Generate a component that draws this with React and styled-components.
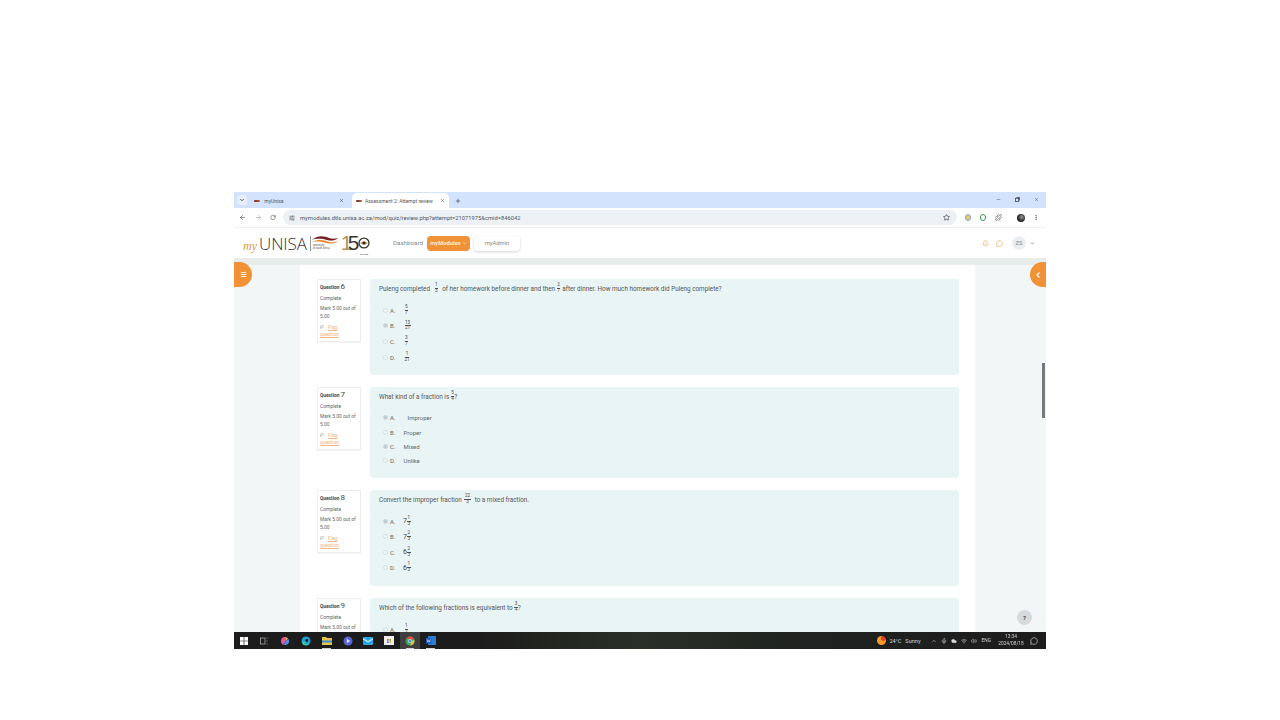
import React from "react";
import styled, { createGlobalStyle } from "styled-components";
import { ArrowLeft, ArrowRight, RotateCw, SlidersHorizontal, Star, Puzzle, MoreVertical, Bell, MessageCircle, ChevronDown, ChevronLeft, ChevronUp, Plus, X, Minus, Menu, Flag, Wifi, Volume2, Mic, Cloud } from "lucide-react";

const Global = createGlobalStyle`
  html, body { margin: 0; padding: 0; background: #fff; height: 720px; overflow: hidden; }
  body { font-family: Roboto, "Liberation Sans", sans-serif; color: #333; }
`;

const Page = styled.div`
  width: 1280px; height: 720px; background: #fff; padding: 192px 234px 71px; box-sizing: border-box;
`;
const Window = styled.div`
  width: 812px; height: 457px; display: flex; flex-direction: column; overflow: hidden; filter: blur(0.45px);
`;

/* Browser chrome */
const TabStrip = styled.div`
  height: 16px; flex: none; background: #d3e3fd; display: flex; align-items: flex-end; padding-left: 3px; position: relative;
`;
const TabMenu = styled.div`
  width: 10px; height: 10px; margin: 0 3px 3px 0; border-radius: 3px; background: #e8eef9; display: flex; align-items: center; justify-content: center; color: #333;
`;
const Tab = styled.div`
  width: ${p => p.$w}px; height: 15px; display: flex; align-items: center; box-sizing: border-box; padding: 0 ${p => p.$right}px 0 4px; gap: 3px;
  background: ${p => (p.$active ? "#fff" : "transparent")}; border-radius: 5px 5px 0 0; font-size: 5px; color: #555; white-space: nowrap;
`;
const TabMark = styled.span`
  width: 6px; height: 2px; background: linear-gradient(90deg, #6b2b2b, #c9603a); border-radius: 1px; flex: none;
`;
const TabTitle = styled.span` flex: 1; `;
const NewTab = styled.div` display: flex; align-items: center; margin: 0 0 4px 6px; color: #444; `;
const WindowButtons = styled.div`
  position: absolute; right: 7px; top: 5px; display: flex; gap: 14px; color: #444;
`;
const Toolbar = styled.div`
  height: 20px; flex: none; background: #fff; display: flex; align-items: center; padding-left: 4px; color: #555; border-bottom: 1px solid #eef0f2; box-sizing: border-box;
`;
const NavIcon = styled.span`
  display: flex; width: ${p => p.$w}px; justify-content: center; flex: none; color: ${p => p.$c || "#555"};
`;
const UrlPill = styled.div`
  width: 674px; height: 15px; margin-left: 7px; border-radius: 8px; background: #edf1f6; display: flex; align-items: center; padding: 0 7px 0 6px; box-sizing: border-box; gap: 5px; font-size: 5.8px; color: #555; flex: none;
`;
const UrlText = styled.span` flex: 1; white-space: nowrap; `;
const ExtDot = styled.span`
  width: 6.5px; height: 6.5px; border-radius: 50%; background: ${p => p.$bg}; border: 1.4px solid ${p => p.$c}; box-sizing: border-box; display: block;
`;
const Avatar = styled.span`
  width: 8px; height: 8px; border-radius: 50%; background: radial-gradient(circle at 60% 40%, #999, #222 60%); display: block;
`;

/* Site header */
const SiteHeader = styled.header`
  height: 30px; flex: none; background: #fff; display: flex; align-items: center; padding-left: 9px; position: relative;
`;
const Logo = styled.div` display: flex; align-items: center; width: 150px; flex: none; height: 24px; `;
const LogoMy = styled.span`
  font: italic 12px "Liberation Serif", serif; color: #e9983e; margin-top: 6px; width: 16px;
`;
const LogoName = styled.span` font: 300 17px "Open Sans", "Liberation Sans", sans-serif; color: #33333a; letter-spacing: -0.1px; `;
const LogoRule = styled.span` width: 1px; height: 15px; background: #999; margin: 0 1px 0 3px; `;
const LogoBadge = styled.div` display: flex; flex-direction: column; width: 26px; margin-top: -1px; `;
const LogoSmall = styled.span` font: 2.7px "Liberation Sans", sans-serif; color: #444; line-height: 3px; margin-left: 1px; white-space: nowrap; `;
const Logo150 = styled.div` display: flex; align-items: center; margin-left: 4px; position: relative; height: 20px; `;
const LogoOne = styled.span` font: 400 21px "Liberation Sans", sans-serif; color: #a8945c; line-height: 20px; width: 7px; margin-left: -1px; `;
const LogoFive = styled.span` font: 400 21px "Liberation Sans", sans-serif; color: #3a3428; line-height: 20px; width: 10px; `;
const LogoYears = styled.span` position: absolute; left: 18px; bottom: -3px; font: 700 2.4px "Liberation Sans", sans-serif; color: #444; `;
const MainNav = styled.nav` display: flex; align-items: center; `;
const NavLink = styled.span` font-size: 6.2px; color: #888; width: 34px; `;
const OrangeButton = styled.span`
  width: 43px; height: 15px; border-radius: 4px; background: #f19236; color: #fdebd3; font-size: 5.8px; font-weight: 700; display: flex; align-items: center; justify-content: center; gap: 1px;
`;
const WhiteButton = styled.span`
  width: 46px; height: 15px; border-radius: 4px; margin-left: 4px; background: #fff; box-shadow: 0 1px 3px rgba(0,0,0,.18); color: #888; font-size: 5.8px; display: flex; align-items: center; justify-content: center;
`;
const UserArea = styled.div`
  margin-left: auto; display: flex; align-items: center; color: #e8a34e; gap: 7px; padding-right: 11px;
`;
const UserChip = styled.span`
  width: 14px; height: 14px; border-radius: 50%; background: #eceff1; color: #888; font-size: 5.8px; display: flex; align-items: center; justify-content: center; margin-left: 2.5px;
`;
const Caret = styled.span` display: flex; color: #666; margin-left: -3px; `;

/* Page body */
const Body = styled.main`
  flex: 1; min-height: 0; background: #f3f6f7; position: relative; overflow: hidden; box-shadow: inset 0 7px 0 #e8eceb;
`;
const Column = styled.div`
  width: 675px; margin: 7px 0 0 66px; background: #fff; padding: 14px 16px 0 17px; box-sizing: border-box; display: flex; flex-direction: column; gap: 12px; height: 400px;
`;
const QuestionRow = styled.section` display: flex; align-items: flex-start; gap: 9px; flex: none; `;
const InfoCard = styled.aside`
  width: 44px; flex: none; height: 63px; box-sizing: border-box; padding: 3px 2px 0; background: #fff; border: 1px solid #eceef0; box-shadow: 0 1px 1px rgba(0,0,0,.04); font-size: 4.9px; color: #666; line-height: 7.2px;
`;
const QTitle = styled.div` font-weight: 700; font-size: 4.8px; color: #444; margin-bottom: 2.5px; line-height: 8px; `;
const QNumber = styled.span` font-size: 8px; font-weight: 400; `;
const QStatus = styled.div` margin-bottom: 3px; `;
const QMark = styled.div` line-height: 7.8px; margin-bottom: 3.5px; `;
const QFlag = styled.div`
  position: relative; width: 28px; color: #f2b283; text-decoration: underline; line-height: 7.6px; text-indent: 8px;
`;
const FlagMark = styled.span` position: absolute; left: 0; top: 1px; color: #777; display: flex; `;
const QContent = styled.div`
  width: 589px; height: ${p => p.$h}px; flex: none; border-radius: 3px; background: #e9f4f5; padding: 0 9px; box-sizing: border-box;
`;
const Prompt = styled.div`
  height: 19px; display: flex; align-items: center; font-size: 6.35px; color: #555; white-space: pre;
`;
const Options = styled.div` margin-top: 4.5px; `;
const OptionRow = styled.div`
  height: ${p => p.$h}px; display: flex; align-items: center; font-size: 6px; color: #666; padding-left: 4px;
`;
const Radio = styled.span`
  width: 5px; height: 5px; border-radius: 50%; box-sizing: border-box; flex: none;
  border: 1px solid ${p => (p.$on ? "#ced8da" : "#d5e0e2")}; background: ${p => (p.$on ? "#c3ced1" : "#f0f7f8")};
`;
const Letter = styled.span` width: 12px; margin-left: 2px; flex: none; `;
const Value = styled.span` margin-left: ${p => p.$ml}px; display: inline-flex; align-items: center; `;
const Whole = styled.span` font-size: 7px; color: #444; `;
const Frac = styled.span`
  display: inline-flex; flex-direction: column; align-items: center; font-size: 4.6px; line-height: 4.8px; color: #444; margin: 0 ${p => p.$mr || 0}px 0 ${p => p.$ml || 0}px;
`;
const FracTop = styled.span` border-bottom: 0.5px solid #555; padding: 0 0.5px; `;
const FracBottom = styled.span``;

const SideTab = styled.div`
  position: absolute; top: 4px; ${p => (p.$side === "left" ? "left: 0; border-radius: 0 13px 13px 0; width: 18px;" : "right: 0; border-radius: 13px 0 0 13px; width: 16px;")}
  height: 25px; background: #f19236; color: #fff; display: flex; align-items: center; justify-content: center;
`;
const HelpButton = styled.div`
  position: absolute; right: 14px; bottom: 7px; width: 15px; height: 15px; border-radius: 50%; background: #d5dadd; color: #444; font-size: 6px; font-weight: 700; display: flex; align-items: center; justify-content: center;
`;
const ScrollThumb = styled.div`
  position: absolute; right: 1px; top: 105px; width: 3px; height: 55px; background: #777a7d;
`;

/* Taskbar */
const Taskbar = styled.footer`
  height: 17px; flex: none; background: linear-gradient(90deg, #1c1c1c 0, #1c1c1c 30%, #2a3026 50%, #1f2220 70%, #1c1c1c 100%); display: flex; align-items: center; color: #ddd;
`;
const TaskSlot = styled.span`
  width: ${p => p.$w || 20.8}px; height: 17px; flex: none; display: flex; align-items: center; justify-content: center; position: relative;
  background: ${p => (p.$active ? "#3f3f3f" : "transparent")};
  &::after { content: ""; display: ${p => (p.$open ? "block" : "none")}; position: absolute; bottom: 0; left: 6px; right: 6px; height: 1px; background: #c8d4dc; }
`;
const Tray = styled.div` margin-left: auto; display: flex; align-items: center; font-size: 5.6px; color: #d5d5d5; height: 17px; `;
const Weather = styled.span`
  width: 9px; height: 9px; border-radius: 50%; background: radial-gradient(circle at 70% 25%, #e2452f 0 25%, #f49a2b 30%); flex: none;
`;
const WeatherText = styled.span` margin: 0 8px 0 3.5px; white-space: nowrap; word-spacing: 2.5px; `;
const TrayIcon = styled.span` width: 10px; display: flex; justify-content: center; `;
const Lang = styled.span` margin: 0 9px 0 3px; font-size: 4.8px; `;
const Clock = styled.span` text-align: center; font-size: 4.8px; line-height: 6.4px; width: 22px; white-space: nowrap; display: flex; flex-direction: column; align-items: center; `;
const Notify = styled.span` width: 24px; display: flex; justify-content: center; `;

const F = ({ a, b, ml, mr }) => (
  <Frac $ml={ml} $mr={mr}><FracTop>{a}</FracTop><FracBottom>{b}</FracBottom></Frac>
);

const questions = [
  {
    n: 6, h: 96, row: 15.6, checked: [1],
    prompt: <>Puleng completed <F a="1" b="3" ml={3} mr={4} />of her homework before dinner and then <F a="2" b="7" mr={2} />after dinner. How much homework did Puleng complete?</>,
    opts: [[<F a="5" b="7" />, 2.5], [<F a="13" b="21" />, 2.5], [<F a="3" b="7" />, 2.5], [<F a="1" b="21" />, 2.5]],
  },
  {
    n: 7, h: 91, row: 14.4, checked: [0, 2],
    prompt: <>What kind of a fraction is <F a="5" b="4" />?</>,
    opts: [["Improper", 5.5], ["Proper", 1.5], ["Mixed", 1.5], ["Unlike", 1.5]],
  },
  {
    n: 8, h: 96, row: 15.5, checked: [0],
    prompt: <>Convert the improper fraction <F a="22" b="3" ml={1} mr={4} />to a mixed fraction.</>,
    opts: [[<><Whole>7</Whole><F a="1" b="3" /></>, 1], [<><Whole>7</Whole><F a="2" b="3" /></>, 1], [<><Whole>6</Whole><F a="2" b="3" /></>, 1], [<><Whole>6</Whole><F a="1" b="3" /></>, 1]],
  },
  {
    n: 9, h: 96, row: 15.5, checked: [],
    prompt: <>Which of the following fractions is equivalent to <F a="3" b="4" />?</>,
    opts: [[<F a="1" b="2" />, 2.5]],
  },
];

const WinLogo = () => (
  <svg width="8" height="8" viewBox="0 0 8 8"><path fill="#fff" d="M0 0h3.7v3.7H0zM4.3 0H8v3.7H4.3zM0 4.3h3.7V8H0zM4.3 4.3H8V8H4.3z" /></svg>
);
const TaskView = () => (
  <svg width="8" height="8" viewBox="0 0 8 8" fill="none" stroke="#bbb" strokeWidth=".7"><rect x=".5" y="1" width="4.5" height="6" /><path d="M6.5 1h1M6.5 4h1M6.5 7h1" /></svg>
);
const Copilot = () => (
  <svg width="10" height="10" viewBox="0 0 10 10"><path fill="#e45aa0" d="M1 5a4 4 0 0 1 4-4l1 4-3 4a4 4 0 0 1-2-4z" /><path fill="#f5b43c" d="M5 1a4 4 0 0 1 3 1.5L6 5z" /><path fill="#4a8fe0" d="M8.5 3A4 4 0 0 1 6 9L3.5 9 6 5z" /></svg>
);
const Edge = () => (
  <svg width="10" height="10" viewBox="0 0 10 10"><circle cx="5" cy="5" r="4.5" fill="#1f9fd8" /><path fill="#38d08a" d="M1 7a4.5 4.5 0 0 0 7.5.5C6 8.5 3.5 8 3.5 5.5 3 5.5 1.5 5.5 1 7z" /><circle cx="5.8" cy="4.5" r="1.4" fill="#1c1c1c" /></svg>
);
const Folder = () => (
  <svg width="10" height="9" viewBox="0 0 10 9"><path fill="#e9c14e" d="M0 1h4l1 1h5v7H0z" /><rect y="4.5" width="10" height="2" fill="#3a8fc4" /></svg>
);
const Media = () => (
  <svg width="10" height="10" viewBox="0 0 10 10"><circle cx="5" cy="5" r="4.5" fill="#5a62d8" /><path fill="#cfe6ff" d="M3.8 2.8 7.2 5 3.8 7.2z" /></svg>
);
const Mail = () => (
  <svg width="10" height="8" viewBox="0 0 10 8"><rect width="10" height="8" rx="1" fill="#2aa6e0" /><path fill="#bfe8fa" d="M0 1l5 3 5-3v1.5L5 5.5 0 2.5z" /></svg>
);
const Store = () => (
  <svg width="10" height="9" viewBox="0 0 10 9"><rect width="10" height="9" fill="#eee" /><path fill="#e8543a" d="M3 3h1.7v1.7H3z" /><path fill="#7ab83c" d="M5.3 3H7v1.7H5.3z" /><path fill="#2a93e0" d="M3 5.3h1.7V7H3z" /><path fill="#f4b42a" d="M5.3 5.3H7V7H5.3z" /></svg>
);
const Chrome = () => (
  <svg width="10" height="10" viewBox="0 0 10 10"><circle cx="5" cy="5" r="4.5" fill="#3aa757" /><path fill="#e8453c" d="M1.2 2.6A4.5 4.5 0 0 1 9.2 3.5H5z" /><path fill="#f5c33b" d="M9.2 3.5A4.5 4.5 0 0 1 5 9.5L7 5.5z" /><circle cx="5" cy="5" r="1.8" fill="#4a8fe0" stroke="#fff" strokeWidth=".5" /></svg>
);
const Word = () => (
  <svg width="10" height="9" viewBox="0 0 10 9"><rect x="2" width="8" height="9" rx=".8" fill="#2b7cd3" /><rect y="2" width="5.5" height="5.5" rx=".5" fill="#185abd" /><path d="M1 3.2l.8 3 .9-2 .9 2 .8-3" stroke="#fff" strokeWidth=".5" fill="none" /></svg>
);
const Swoosh = () => (
  <svg width="26" height="9" viewBox="0 0 26 9"><path fill="#7a1e22" d="M0 5C6 0 12 1 17 3c3 1 6 1 9 0-3 3-7 3-11 2S5 3 0 5z" /><path fill="#e8842c" d="M0 7c6-3 12-2 17 0 3 1 6 0 9-1-3 3-7 3-11 2S5 6 0 7z" /></svg>
);
const Eye = () => (
  <svg width="12" height="12" viewBox="0 0 14 14"><circle cx="7" cy="7" r="5.8" fill="none" stroke="#3a3428" strokeWidth="1.5" /><path d="M2.5 7C4 4.5 10 4.5 11.5 7 10 9.5 4 9.5 2.5 7z" fill="#c7a75f" /><circle cx="7" cy="7" r="1.8" fill="#2b2620" /></svg>
);
const RestoreIcon = () => (
  <svg width="5" height="5" viewBox="0 0 5 5" fill="none" stroke="currentColor" strokeWidth=".8"><rect x=".5" y="1.3" width="3.2" height="3.2" /><path d="M1.5 .5h3v3" /></svg>
);

export default function App() {
  return (
    <Page>
      <Global />
      <Window>
        <TabStrip>
          <TabMenu><ChevronDown size={6} strokeWidth={3} /></TabMenu>
          <Tab $w={102} $right={8}><TabMark /><TabTitle>&nbsp;myUnisa</TabTitle><X size={5} strokeWidth={2.5} /></Tab>
          <Tab $w={97} $right={4} $active><TabMark /><TabTitle>Assessment 2: Attempt review</TabTitle><X size={5} strokeWidth={2.5} /></Tab>
          <NewTab><Plus size={6} strokeWidth={2.5} /></NewTab>
          <WindowButtons><Minus size={5} strokeWidth={2} /><RestoreIcon /><X size={5} strokeWidth={2} /></WindowButtons>
        </TabStrip>
        <Toolbar>
          <NavIcon $w={8}><ArrowLeft size={7} strokeWidth={2.2} /></NavIcon>
          <NavIcon $w={24} $c="#aaa"><ArrowRight size={7} strokeWidth={2.2} /></NavIcon>
          <NavIcon $w={6}><RotateCw size={7} strokeWidth={2.2} /></NavIcon>
          <UrlPill>
            <SlidersHorizontal size={6} strokeWidth={2.2} />
            <UrlText>mymodules.dtls.unisa.ac.za/mod/quiz/review.php?attempt=21071975&amp;cmid=846042</UrlText>
            <Star size={7} strokeWidth={2.2} color="#333" />
          </UrlPill>
          <NavIcon $w={22}><ExtDot $bg="#e8c47a" $c="#7fb0c8" /></NavIcon>
          <NavIcon $w={8}><ExtDot $bg="#fff" $c="#3a9a5a" /></NavIcon>
          <NavIcon $w={22} $c="#444"><Puzzle size={7} strokeWidth={2} /></NavIcon>
          <NavIcon $w={24}><Avatar /></NavIcon>
          <NavIcon $w={6} $c="#444"><MoreVertical size={7} strokeWidth={2.2} /></NavIcon>
        </Toolbar>
        <SiteHeader>
          <Logo>
            <LogoMy>my</LogoMy>
            <LogoName>UNISA</LogoName>
            <LogoRule />
            <LogoBadge>
              <Swoosh />
              <LogoSmall>university</LogoSmall>
              <LogoSmall>of south africa</LogoSmall>
            </LogoBadge>
            <Logo150>
              <LogoOne>1</LogoOne>
              <LogoFive>5</LogoFive>
              <Eye />
              <LogoYears>YEARS</LogoYears>
            </Logo150>
          </Logo>
          <MainNav>
            <NavLink>Dashboard</NavLink>
            <OrangeButton>myModules<ChevronDown size={5} strokeWidth={3} /></OrangeButton>
            <WhiteButton>myAdmin</WhiteButton>
          </MainNav>
          <UserArea>
            <Bell size={7} strokeWidth={2} />
            <MessageCircle size={7} strokeWidth={2} />
            <UserChip>ZS</UserChip>
            <Caret><ChevronDown size={5} strokeWidth={3} /></Caret>
          </UserArea>
        </SiteHeader>
        <Body>
          <Column>
            {questions.map(q => (
              <QuestionRow key={q.n}>
                <InfoCard>
                  <QTitle>Question <QNumber>{q.n}</QNumber></QTitle>
                  <QStatus>Complete</QStatus>
                  <QMark>Mark 5.00 out of 5.00</QMark>
                  <QFlag><FlagMark><Flag size={4} strokeWidth={2} /></FlagMark>Flag question</QFlag>
                </InfoCard>
                <QContent $h={q.h}>
                  <Prompt>{q.prompt}</Prompt>
                  <Options>
                    {q.opts.map(([v, ml], i) => (
                      <OptionRow key={i} $h={q.row}>
                        <Radio $on={q.checked.includes(i)} />
                        <Letter>{"ABCD"[i]}.</Letter>
                        <Value $ml={ml}>{v}</Value>
                      </OptionRow>
                    ))}
                  </Options>
                </QContent>
              </QuestionRow>
            ))}
          </Column>
          <SideTab $side="left"><Menu size={7} strokeWidth={3} /></SideTab>
          <SideTab $side="right"><ChevronLeft size={8} strokeWidth={4} /></SideTab>
          <HelpButton>?</HelpButton>
          <ScrollThumb />
        </Body>
        <Taskbar>
          <TaskSlot $w={20}><WinLogo /></TaskSlot>
          <TaskSlot><TaskView /></TaskSlot>
          <TaskSlot><Copilot /></TaskSlot>
          <TaskSlot><Edge /></TaskSlot>
          <TaskSlot $open><Folder /></TaskSlot>
          <TaskSlot><Media /></TaskSlot>
          <TaskSlot><Mail /></TaskSlot>
          <TaskSlot><Store /></TaskSlot>
          <TaskSlot $active $open><Chrome /></TaskSlot>
          <TaskSlot $open><Word /></TaskSlot>
          <Tray>
            <Weather />
            <WeatherText>24°C Sunny</WeatherText>
            <TrayIcon><ChevronUp size={6} strokeWidth={2} /></TrayIcon>
            <TrayIcon><Mic size={6} strokeWidth={2} /></TrayIcon>
            <TrayIcon><Cloud size={6} fill="#ddd" strokeWidth={1} /></TrayIcon>
            <TrayIcon><Wifi size={6} strokeWidth={2} /></TrayIcon>
            <TrayIcon><Volume2 size={6} strokeWidth={2} /></TrayIcon>
            <Lang>ENG</Lang>
            <Clock><span>13:34</span><span>2024/08/18</span></Clock>
            <Notify><MessageCircle size={8} strokeWidth={2} /></Notify>
          </Tray>
        </Taskbar>
      </Window>
    </Page>
  );
}
